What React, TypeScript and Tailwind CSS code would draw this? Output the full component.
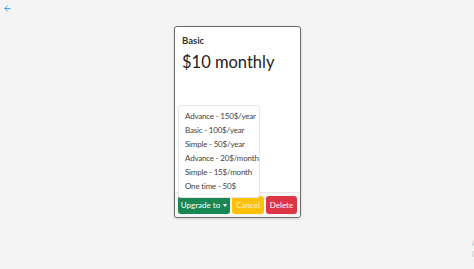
import { ArrowLeft } from "lucide-react";

const plans = [
  "Advance - 150$/year",
  "Basic - 100$/year",
  "Simple - 50$/year",
  "Advance - 20$/month",
  "Simple - 15$/month",
  "One time - 50$",
];

export default function App() {
  return (
    <div
      className="relative h-[269px] w-[474px] overflow-hidden bg-[#f4f4f4] text-[#212529]"
      style={{ fontFamily: 'Lato, "Open Sans", sans-serif' }}
    >
      <div className="flex h-[16px] items-center pl-[3px] pt-[1px] text-[#3b9be0]">
        <ArrowLeft className="h-[9px] w-[9px]" strokeWidth={2.5} />
      </div>

      <div className="flex justify-center pt-[10px] pl-[1px]">
        <div className="relative flex h-[192px] w-[127px] flex-col rounded-[3px] border border-[#6b6b6b] bg-white shadow-[0_1px_3px_rgba(0,0,0,0.15)]">
          <div className="flex-1 px-[7px] pt-[7px]">
            <div className="text-[9.5px] font-bold leading-[14px] text-[#333]">Basic</div>
            <div className="mt-[1px] whitespace-nowrap text-[16.5px] leading-[26px] text-[#222]">$10 monthly</div>
          </div>

          <div className="flex h-[25px] items-center gap-[2px] rounded-b-[3px] border-t border-[#e5e5e5] bg-[#f7f7f7] px-[3px]">
            <button className="flex h-[18px] w-[52px] items-center justify-center gap-[3px] whitespace-nowrap rounded-[3px] bg-[#198754] text-[8px] text-white">
              Upgrade to
              <span className="border-x-[2.5px] border-t-[3px] border-x-transparent border-t-white" />
            </button>
            <button className="h-[18px] w-[32px] rounded-[3px] bg-[#ffc107] text-[8px] text-[#fff3cc]">
              Cancel
            </button>
            <button className="h-[18px] w-[31px] rounded-[3px] bg-[#dc3545] text-[8px] text-white">
              Delete
            </button>
          </div>

          <div className="absolute left-[3px] top-[78px] w-[82px] rounded-[3px] border border-[#e6e6e6] bg-white pb-[4px] pt-[3px]">
            {plans.map((p) => (
              <div key={p} className="h-[14px] whitespace-nowrap pl-[6px] text-[8px] leading-[14px] tracking-[-0.2px] text-[#444]">
                {p}
              </div>
            ))}
          </div>
        </div>
      </div>

      <div className="absolute right-[-3px] top-[238px] text-[8px] leading-[11px] text-[#c8c8c8]">
        <div>A</div>
        <div>C</div>
      </div>
    </div>
  );
}
